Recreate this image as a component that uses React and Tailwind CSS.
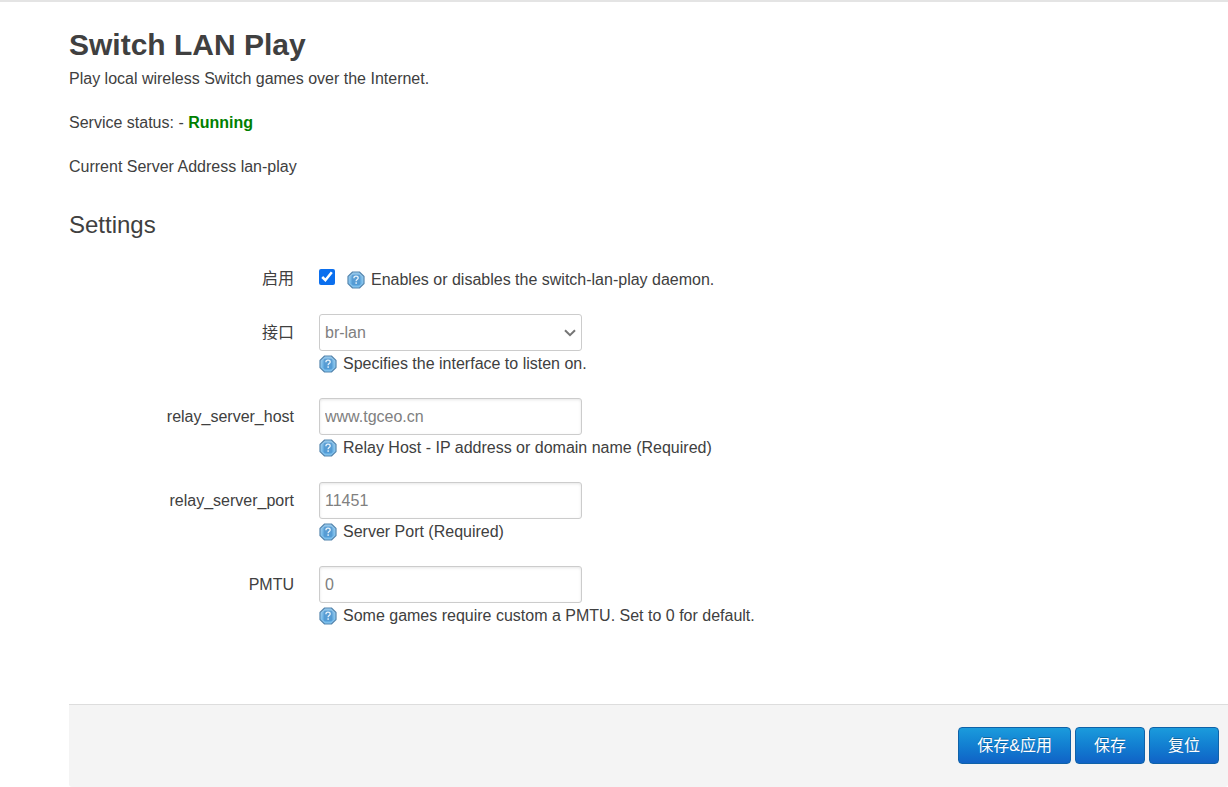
import { useState } from 'react'

const FIELD =
  'block w-[263px] h-[37px] rounded-[3px] border border-[#ccc] bg-white pl-[5px] text-base text-[#808080] outline-none focus:border-[#52a8ec]'

function HelpIcon() {
  return (
    <svg width="18" height="18" viewBox="0 0 18 18" className="shrink-0" aria-hidden="true">
      <defs>
        <linearGradient id="help-fill" x1="0" y1="0" x2="0" y2="1">
          <stop offset="0" stopColor="#8cc0e6" />
          <stop offset="1" stopColor="#66b4ea" />
        </linearGradient>
      </defs>
      <path
        d="M5.6 1h6.8L17 5.4v7.2L12.4 17H5.6L1 12.6V5.4z"
        fill="url(#help-fill)"
        stroke="#5585ad"
        strokeWidth="1.2"
        strokeLinejoin="round"
      />
      <path d="M6 2.2h6l3.8 3.7v6.2L12 15.8H6l-3.8-3.7V5.9z" fill="none" stroke="#a5d0ee" strokeWidth="0.5" />
      <rect x="4.5" y="3.8" width="9" height="10.4" rx="2" fill="#4189c6" opacity="0.6" />
      <path
        d="M6.9 7.3c0-1.4.9-2.1 2.1-2.1s2.2.7 2.2 1.8c0 1.5-2.1 1.6-2.1 3.2"
        fill="none"
        stroke="#e9f4fc"
        strokeWidth="1.3"
      />
      <rect x="8.4" y="11.3" width="1.5" height="1.5" fill="#e9f4fc" />
    </svg>
  )
}

function Hint({ id, children }) {
  return (
    <div id={id} className="flex items-center gap-[6px] leading-[26px]">
      <HelpIcon />
      <span>{children}</span>
    </div>
  )
}

function Row({ label, htmlFor, children }) {
  return (
    <div className="flex gap-[25px]">
      <label htmlFor={htmlFor} className="w-[225px] shrink-0 pt-2 text-right leading-[22px]">
        {label}
      </label>
      <div className="min-w-0 flex-1">{children}</div>
    </div>
  )
}

function TextRow({ name, label, value, onChange, hint }) {
  return (
    <Row label={label} htmlFor={name}>
      <input
        id={name}
        type="text"
        aria-describedby={`${name}-hint`}
        className={`${FIELD} shadow-[inset_0_1px_3px_rgba(0,0,0,0.1)]`}
        value={value}
        onChange={e => onChange(name, e.target.value)}
      />
      <Hint id={`${name}-hint`}>{hint}</Hint>
    </Row>
  )
}

function ActionButton({ children, ...props }) {
  return (
    <button
      className="h-[37px] rounded-[4px] border border-[#0f62a8] bg-linear-to-b from-[#1b9bdc] to-[#1162c6] px-[18px] text-base text-white [text-shadow:0_-1px_0_rgba(0,0,0,0.25)] hover:to-[#1b9bdc]"
      {...props}
    >
      {children}
    </button>
  )
}

const defaults = {
  enabled: true,
  ifname: 'br-lan',
  relay_server_host: 'www.tgceo.cn',
  relay_server_port: '11451',
  pmtu: '0',
}

export default function App() {
  const [form, setForm] = useState(defaults)

  function update(name, value) {
    setForm(prev => ({ ...prev, [name]: value }))
  }

  return (
    <div className="border-t-2 border-[#e4e4e4] bg-white pl-[69px] font-['Liberation_Sans','Noto_Sans_CJK_SC',sans-serif] text-base text-[#404040]">
      <form onSubmit={e => e.preventDefault()}>
        <header className="pt-[25px]">
          <h1 className="text-3xl leading-9 font-bold">Switch LAN Play</h1>
          <p className="mt-[5px] leading-[22px]">Play local wireless Switch games over the Internet.</p>
          <p className="mt-[22px] leading-[22px]">
            Service status: - <strong className="text-[#008000]">Running</strong>
          </p>
          <p className="mt-[22px] leading-[22px]">Current Server Address lan-play</p>
        </header>

        <section className="pt-[29px]">
          <h2 className="text-2xl leading-9">Settings</h2>
          <div className="mt-[17px] flex flex-col gap-[21px]">
            <Row label="启用" htmlFor="enabled">
              <div className="flex h-[33px] items-end gap-3">
                <input
                  id="enabled"
                  type="checkbox"
                  aria-describedby="enabled-hint"
                  className="mb-2 size-4 accent-[#0b6fee]"
                  checked={form.enabled}
                  onChange={e => update('enabled', e.target.checked)}
                />
                <Hint id="enabled-hint">Enables or disables the switch-lan-play daemon.</Hint>
              </div>
            </Row>
            <Row label="接口" htmlFor="ifname">
              <div className="relative w-[263px]">
                <select
                  id="ifname"
                  aria-describedby="ifname-hint"
                  className={`${FIELD} appearance-none`}
                  value={form.ifname}
                  onChange={e => update('ifname', e.target.value)}
                >
                  <option>br-lan</option>
                </select>
                <svg
                  width="12"
                  height="8"
                  viewBox="0 0 12 8"
                  className="pointer-events-none absolute top-[15px] right-[6px]"
                  aria-hidden="true"
                >
                  <path d="M1 1.2l5 5 5-5" fill="none" stroke="#757575" strokeWidth="2" />
                </svg>
              </div>
              <Hint id="ifname-hint">Specifies the interface to listen on.</Hint>
            </Row>
            <TextRow
              name="relay_server_host"
              label="relay_server_host"
              value={form.relay_server_host}
              onChange={update}
              hint="Relay Host - IP address or domain name (Required)"
            />
            <TextRow
              name="relay_server_port"
              label="relay_server_port"
              value={form.relay_server_port}
              onChange={update}
              hint="Server Port (Required)"
            />
            <TextRow
              name="pmtu"
              label="PMTU"
              value={form.pmtu}
              onChange={update}
              hint="Some games require custom a PMTU. Set to 0 for default."
            />
          </div>
        </section>

        <footer className="mt-[75px] flex justify-end gap-1 rounded-b-[3px] border-t border-[#ddd] bg-[#f4f4f4] pt-[22px] pr-[9px] pb-[23px]">
          <ActionButton type="submit">保存&amp;应用</ActionButton>
          <ActionButton type="button">保存</ActionButton>
          <ActionButton type="button" onClick={() => setForm(defaults)}>
            复位
          </ActionButton>
        </footer>
      </form>
    </div>
  )
}
